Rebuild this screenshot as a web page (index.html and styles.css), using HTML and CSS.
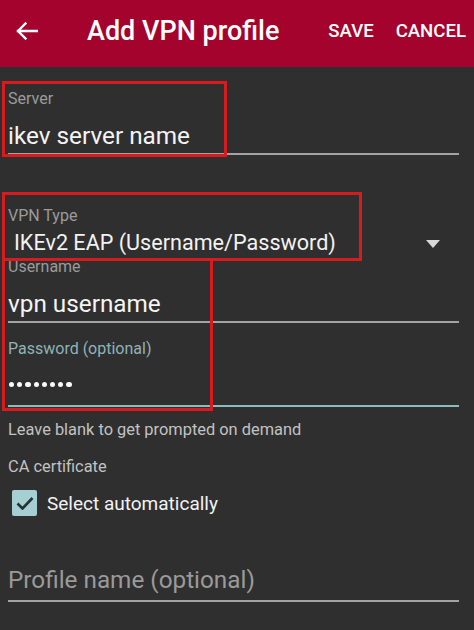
FILE: index.html
```html
<!DOCTYPE html>
<html>
<head>
<meta charset="utf-8">
<link rel="stylesheet" href="styles.css">
</head>
<body>
<div class="page">
  <header class="appbar">
    <svg class="back" width="22" height="18" viewBox="0 0 22 18"><path d="M21 9H2M9.5 1.5L2 9l7.5 7.5" fill="none" stroke="#fff" stroke-width="2.4" stroke-linecap="square"/></svg>
    <h1 class="title">Add VPN profile</h1>
    <div class="actions">
      <span class="action">SAVE</span>
      <span class="action">CANCEL</span>
    </div>
  </header>

  <main class="form">
    <div class="field server">
      <div class="label">Server</div>
      <div class="value">ikev server name</div>
    </div>

    <div class="spinner">
      <div class="label">VPN Type</div>
      <div class="spinner-row">
        <span class="spinner-value">IKEv2 EAP (Username/Password)</span>
        <svg class="caret" width="14" height="8" viewBox="0 0 14 8"><path d="M0 0h14L7 8z" fill="#d8d8d8"/></svg>
      </div>
    </div>

    <div class="field user">
      <div class="label">Username</div>
      <div class="value">vpn username</div>
    </div>

    <div class="field pass focused">
      <div class="label">Password (optional)</div>
      <div class="dots"><i></i><i></i><i></i><i></i><i></i><i></i><i></i><i></i></div>
    </div>

    <p class="helper">Leave blank to get prompted on demand</p>
    <p class="section">CA certificate</p>

    <label class="check">
      <span class="box"><svg width="18" height="14" viewBox="0 0 18 14"><path d="M1.5 7.5l5 5L16.5 2" fill="none" stroke="#263238" stroke-width="2.6"/></svg></span>
      <span class="check-text">Select automatically</span>
    </label>

    <div class="field profile">
      <div class="value hint">Profile name (optional)</div>
    </div>
  </main>

  <div class="mark m1"></div>
  <div class="mark m2"></div>
  <div class="mark m3"></div>
</div>
</body>
</html>
```

FILE: styles.css
```css
* { box-sizing: border-box; }
html, body { margin: 0; padding: 0; }
body {
  background: #2f2f2f;
  font-family: Roboto, "Noto Sans", sans-serif;
  color: #f2f2f2;
  width: 474px;
  height: 630px;
  overflow: hidden;
}
.page { position: relative; width: 474px; height: 630px; }

.appbar {
  height: 67px;
  padding-bottom: 6px;
  background: #a3032c;
  display: flex;
  align-items: center;
  color: #fff;
}
.back { margin-left: 16px; flex: none; }
.title {
  margin: 0 0 0 49px;
  font-size: 27px;
  font-weight: 500;
  line-height: 30px;
  flex: 1;
}
.actions { display: flex; gap: 22px; margin-right: 8px; }
.action { font-size: 18.6px; font-weight: 500; line-height: 22px; }

.form { padding: 22px 15px 0 8px; }

.label { font-size: 16px; line-height: 19px; color: #9b9b9b; }
.value { font-size: 24.3px; line-height: 28px; color: #f4f4f4; }

.field { border-bottom: 2px solid #a3a3a3; }
.server .value { margin-top: 14px; padding-bottom: 3px; }

.spinner { margin-top: 51px; }
.spinner-row { display: flex; align-items: center; margin-top: 5px; padding-left: 6px; }
.spinner-value { font-size: 21.6px; line-height: 25px; flex: 1; }
.caret { margin-right: 19px; margin-top: 2px; }

.user { margin-top: 2px; }
.user .value { margin-top: 14px; padding-bottom: 3px; }

.pass { margin-top: 16px; border-bottom-color: #8dbcbc; }
.pass .label { color: #8fb3b6; }
.dots { height: 47px; display: flex; align-items: center; gap: 3px; padding-left: 1px; padding-top: 6px; }
.dots i { width: 5.2px; height: 5.2px; border-radius: 50%; background: #fafafa; display: block; }

.helper, .section {
  margin: 0;
  font-size: 16.4px;
  line-height: 19px;
  color: #c2c2c2;
}
.helper { margin-top: 13px; }
.section { margin-top: 18px; }

.check { display: flex; align-items: center; gap: 10px; margin-top: 14px; padding-left: 4px; }
.box {
  width: 25px; height: 26px;
  background: #a6cfd3;
  border-radius: 2px;
  display: flex; align-items: center; justify-content: center;
}
.check-text { font-size: 19px; line-height: 24px; color: #f2f2f2; margin-top: 2px; }

.profile { margin-top: 50px; }
.profile .value { padding-bottom: 6px; }
.hint { color: #9a9a9a; }

.mark { position: absolute; border: 3px solid #d81b1e; }
.m1 { left: 2px; top: 81px; width: 225px; height: 76px; }
.m2 { left: 2px; top: 192px; width: 360px; height: 69px; }
.m3 { left: 2px; top: 258px; width: 211px; height: 153px; border-top: none; }
```
